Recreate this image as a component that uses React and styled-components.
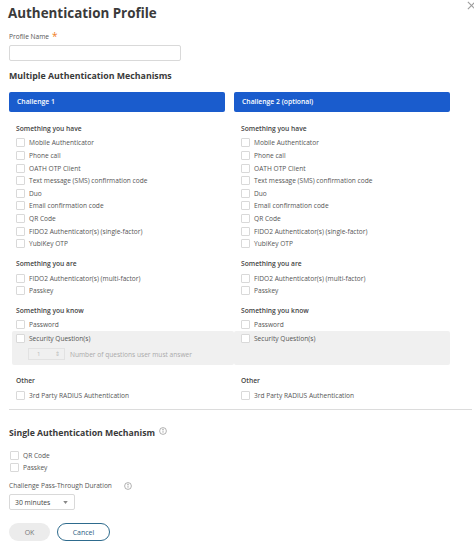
import styled, { createGlobalStyle } from "styled-components";

const GlobalStyle = createGlobalStyle`
  body {
    margin: 0;
    background: #fff;
    font-family: "Open Sans", "Liberation Sans", sans-serif;
    color: #333;
    overflow: hidden;
  }
`;

const Page = styled.div`
  width: 474px;
  height: 550px;
  padding: 0 2px 0 9px;
  box-sizing: border-box;
  display: flex;
  flex-direction: column;
  overflow: hidden;
`;

const Header = styled.div`
  display: flex;
  justify-content: space-between;
  align-items: flex-start;
  margin-left: -1px;
`;

const Title = styled.h1`
  margin: 0;
  font-size: 13.4px;
  line-height: 26px;
  font-weight: 700;
  color: #3a3a3a;
`;

const Close = styled.div`
  margin: 1px -4px 0 0;
  color: #999;
  display: flex;
`;

const FieldLabel = styled.div`
  margin-top: ${(p) => p.$mt || 0}px;
  font-size: 6.6px;
  line-height: 12px;
  color: #555;
  display: flex;
  align-items: center;
  gap: 3px;
`;

const Required = styled.span`
  color: #f07c1b;
  font-size: 10px;
  line-height: 8px;
  margin-top: -3px;
`;

const TextInput = styled.div`
  margin-top: 2px;
  width: 172px;
  height: 16px;
  box-sizing: border-box;
  border: 1px solid #d9d9d9;
  border-radius: 2px;
`;

const SectionTitle = styled.h2`
  margin: ${(p) => p.$mt}px 0 0;
  font-size: ${(p) => p.$size}px;
  line-height: 14px;
  font-weight: 700;
  color: #3a3a3a;
  display: flex;
  align-items: center;
  gap: 4px;
`;

const Sup = styled.span`
  display: flex;
  margin-top: -5px;
`;

const Columns = styled.div`
  margin-top: 9px;
  display: grid;
  grid-template-columns: 216px 216px;
  column-gap: 9px;
`;

const Column = styled.div`
  display: flex;
  flex-direction: column;
`;

const Bar = styled.div`
  height: 20px;
  background: #1a5ccd;
  border-radius: 2px;
  color: #fff;
  font-size: 6.8px;
  font-weight: 600;
  line-height: 20px;
  padding-left: 8px;
`;

const Group = styled.div`
  display: flex;
  flex-direction: column;
  padding-left: 7px;
  margin-top: ${(p) => p.$mt}px;
`;

const GroupTitle = styled.div`
  font-size: 6.7px;
  font-weight: 600;
  line-height: 12px;
  color: #444;
  margin-bottom: 1.7px;
`;

const Row = styled.label`
  display: flex;
  align-items: center;
  gap: 4px;
  height: 12.6px;
  font-size: 6.6px;
  color: #555;
`;

const Box = styled.span`
  width: 9px;
  height: 9px;
  box-sizing: border-box;
  border: 1px solid #d9d9d9;
  border-radius: 1px;
  background: #fff;
  flex-shrink: 0;
`;

const Disabled = styled.div`
  margin: 0 ${(p) => (p.$right ? 0 : -9)}px 0 ${(p) => (p.$right ? -7 : -4)}px;
  padding: 1px 0 5px ${(p) => (p.$right ? 7 : 4)}px;
  height: 34px;
  box-sizing: border-box;
  background: #f0f0f0;
  border-radius: 2px;
`;

const CountRow = styled.div`
  margin: 3.4px 0 0 12px;
  display: flex;
  align-items: center;
  gap: 5px;
  font-size: 6.6px;
  color: #aaa;
`;

const Spinner = styled.div`
  width: 37px;
  height: 12px;
  box-sizing: border-box;
  border: 1px solid #e2e2e2;
  display: flex;
  align-items: center;
  justify-content: space-between;
  padding: 0 4px 0 8px;
  color: #bbb;
  font-size: 6px;
`;

const Divider = styled.hr`
  margin: 8px 0 0;
  width: 463px;
  border: 0;
  border-top: 1px solid #dcdcdc;
`;

const Single = styled.div`
  margin-top: 8.5px;
  display: flex;
  flex-direction: column;
  padding-left: 1px;
`;

const Select = styled.div`
  margin-top: 2px;
  width: 66px;
  height: 16px;
  box-sizing: border-box;
  border: 1px solid #d9d9d9;
  border-radius: 2px;
  display: flex;
  align-items: center;
  justify-content: space-between;
  padding: 0 6px 0 5px;
  font-size: 6.8px;
  color: #444;
`;

const Buttons = styled.div`
  margin-top: 13px;
  display: flex;
  gap: 7px;
`;

const Button = styled.button`
  height: 18px;
  width: ${(p) => p.$w}px;
  border-radius: 9px;
  font-family: inherit;
  font-size: 7px;
  padding: 0;
  border: ${(p) => (p.$primary ? "none" : "1.2px solid #2e6b8d")};
  background: ${(p) => (p.$primary ? "#ececec" : "#fff")};
  color: ${(p) => (p.$primary ? "#777" : "#2c5e85")};
`;

const Info = ({ size = 8 }) => (
  <svg width={size} height={size} viewBox="0 0 16 16" fill="none" stroke="#888" strokeWidth="1.3">
    <circle cx="8" cy="8" r="6.8" />
    <line x1="8" y1="7" x2="8" y2="11.5" />
    <circle cx="8" cy="4.6" r="0.6" fill="#888" />
  </svg>
);

const have = [
  "Mobile Authenticator",
  "Phone call",
  "OATH OTP Client",
  "Text message (SMS) confirmation code",
  "Duo",
  "Email confirmation code",
  "QR Code",
  "FIDO2 Authenticator(s) (single-factor)",
  "YubiKey OTP",
];
const are = ["FIDO2 Authenticator(s) (multi-factor)", "Passkey"];

const Check = ({ children }) => (
  <Row>
    <Box />
    {children}
  </Row>
);

const Challenge = ({ title, right }) => (
  <Column>
    <Bar>{title}</Bar>
    <Group $mt={11}>
      <GroupTitle>Something you have</GroupTitle>
      {have.map((t) => (
        <Check key={t}>{t}</Check>
      ))}
    </Group>
    <Group $mt={8}>
      <GroupTitle>Something you are</GroupTitle>
      {are.map((t) => (
        <Check key={t}>{t}</Check>
      ))}
    </Group>
    <Group $mt={8}>
      <GroupTitle>Something you know</GroupTitle>
      <Check>Password</Check>
      <Disabled $right={right}>
        <Check>Security Question(s)</Check>
        {!right && (
          <CountRow>
            <Spinner>
              <span>1</span>
              <span>⇕</span>
            </Spinner>
            Number of questions user must answer
          </CountRow>
        )}
      </Disabled>
    </Group>
    <Group $mt={10}>
      <GroupTitle>Other</GroupTitle>
      <Check>3rd Party RADIUS Authentication</Check>
    </Group>
  </Column>
);

export default function App() {
  return (
    <>
      <GlobalStyle />
      <Page>
        <Header>
          <Title>Authentication Profile</Title>
          <Close>
            <svg width="9" height="9" viewBox="0 0 10 10" stroke="#9a9a9a" strokeWidth="1.2">
              <line x1="1" y1="1" x2="9" y2="9" />
              <line x1="9" y1="1" x2="1" y2="9" />
            </svg>
          </Close>
        </Header>
        <FieldLabel $mt={5}>
          Profile Name <Required>*</Required>
        </FieldLabel>
        <TextInput />
        <SectionTitle $mt={8} $size={8.8}>
          Multiple Authentication Mechanisms
        </SectionTitle>
        <Columns>
          <Challenge title="Challenge 1" />
          <Challenge title="Challenge 2 (optional)" right />
        </Columns>
        <Divider />
        <SectionTitle $mt={16} $size={8.7}>
          Single Authentication Mechanism
          <Sup>
            <Info size={8} />
          </Sup>
        </SectionTitle>
        <Single>
          <Check>QR Code</Check>
          <Check>Passkey</Check>
        </Single>
        <FieldLabel $mt={6}>
          Challenge Pass-Through Duration
          <span style={{ width: 6 }} />
          <Info size={8} />
        </FieldLabel>
        <Select>
          30 minutes
          <svg width="5" height="3" viewBox="0 0 6 4">
            <path d="M0 0 L6 0 L3 4 Z" fill="#888" />
          </svg>
        </Select>
        <Buttons>
          <Button $primary $w={41}>
            OK
          </Button>
          <Button $w={53}>Cancel</Button>
        </Buttons>
      </Page>
    </>
  );
}
